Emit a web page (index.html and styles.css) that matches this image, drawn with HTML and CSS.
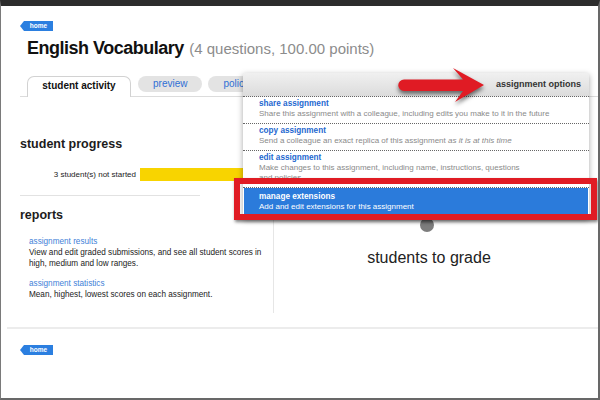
FILE: index.html
```html
<!DOCTYPE html>
<html lang="en">
<head>
<meta charset="utf-8">
<title>English Vocabulary</title>
<link rel="stylesheet" href="styles.css">
</head>
<body>
<div class="frame">
  <header class="head">
    <a class="tag">home</a>
    <h1 class="title">English Vocabulary <span class="meta">(4 questions, 100.00 points)</span></h1>
    <nav class="tabs">
      <span class="tab active">student activity</span>
      <span class="tab pill pill-preview">preview</span>
      <span class="tab pill">policies</span>
    </nav>
  </header>

  <main class="content">
    <section class="left">
      <h2 class="sec">student progress</h2>
      <div class="progress">
        <span class="plabel">3 student(s) not started</span>
        <span class="bar"></span>
      </div>
      <hr class="divider">
      <h2 class="sec reports">reports</h2>
      <div class="report">
        <a class="rlink">assignment results</a>
        <p class="rdesc">View and edit graded submissions, and see all student scores in high, medium and low ranges.</p>
      </div>
      <div class="report">
        <a class="rlink">assignment statistics</a>
        <p class="rdesc">Mean, highest, lowest scores on each assignment.</p>
      </div>
    </section>
    <section class="right">
      <div class="grade">students to grade</div>
    </section>
  </main>

  <footer class="foot">
    <a class="tag">home</a>
  </footer>

  <span class="dot"></span>

  <div class="menu">
    <div class="menu-head">assignment options</div>
    <div class="item">
      <div class="item-title">share assignment</div>
      <div class="item-desc">Share this assignment with a colleague, including edits you make to it in the future</div>
    </div>
    <div class="item">
      <div class="item-title">copy assignment</div>
      <div class="item-desc">Send a colleague an exact replica of this assignment <em>as it is at this time</em></div>
    </div>
    <div class="item">
      <div class="item-title">edit assignment</div>
      <div class="item-desc">Make changes to this assignment, including name, instructions, questions<br>and policies</div>
    </div>
    <div class="item item-active">
      <div class="item-title">manage extensions</div>
      <div class="item-desc">Add and edit extensions for this assignment</div>
    </div>
  </div>

  <div class="callout"></div>

  <svg class="arrow" viewBox="396 62 100 50" width="100" height="50" aria-hidden="true">
    <path d="M404 79.5 L463 79.5 L453 68 L484 85 L455 102 L463 91 L404 91 A5.75 5.75 0 0 1 404 79.5 Z" fill="#e01b24"/>
  </svg>
</div>
</body>
</html>
```

FILE: styles.css
```css
html, body {
  margin: 0;
  padding: 0;
  background: #fff;
}

body {
  font-family: "Liberation Sans", Arial, Helvetica, sans-serif;
  color: #222;
}

.frame {
  position: relative;
  width: 600px;
  height: 400px;
  box-sizing: border-box;
  border-top: 6px solid #2c2c2c;
  border-left: 1px solid #7a7a7a;
  border-right: 2px solid #686868;
  border-bottom: 2px solid #686868;
  background: #fff;
  overflow: hidden;
}

/* header */
.head {
  padding: 15px 0 0 19px;
}

.tag {
  display: block;
  width: 33px;
  height: 10px;
  box-sizing: border-box;
  padding-left: 4px;
  background: #2b7fe0;
  color: #fff;
  font-weight: bold;
  font-size: 6.5px;
  line-height: 10px;
  text-align: center;
  clip-path: polygon(4px 0, 100% 0, 100% 100%, 4px 100%, 0 50%);
}

.title {
  margin: 6px 0 0 7px;
  font-size: 18px;
  line-height: 22px;
  font-weight: bold;
  letter-spacing: -0.5px;
  color: #111;
  white-space: nowrap;
}

.meta {
  margin-left: 1px;
  font-weight: normal;
  font-size: 15px;
  letter-spacing: 0;
  color: #8c8c8c;
}

.tabs {
  display: flex;
  align-items: flex-start;
  height: 20px;
  margin-top: 16px;
  padding-left: 7px;
  border-bottom: 1px solid #dcdcdc;
}

.tab {
  display: block;
  font-size: 10px;
  white-space: nowrap;
}

.active {
  width: 104px;
  height: 21px;
  box-sizing: border-box;
  border: 1px solid #d2d2d2;
  border-bottom: 0;
  border-radius: 7px 7px 0 0;
  background: #fff;
  text-align: center;
  font-weight: bold;
  line-height: 18px;
  color: #111;
}

.pill {
  height: 16px;
  padding: 0 15px;
  border-radius: 8px;
  background: #e3e3e3;
  color: #2f6fd5;
  line-height: 16px;
  margin-left: 6px;
}

.pill-preview {
  margin-left: 7px;
}

/* main content */
.content {
  display: flex;
  height: 216px;
}

.left {
  width: 272px;
  box-sizing: border-box;
  padding-left: 19px;
}

.sec {
  margin: 40px 0 0;
  font-size: 12.5px;
  line-height: 15px;
  font-weight: bold;
  color: #1c1c1c;
}

.progress {
  display: flex;
  align-items: center;
  height: 13px;
  margin-top: 16px;
}

.plabel {
  width: 116px;
  text-align: right;
  font-size: 8px;
  color: #222;
  white-space: nowrap;
}

.bar {
  width: 120px;
  height: 13px;
  margin-left: 4px;
  background: #f8d400;
}

.divider {
  width: 180px;
  height: 0;
  margin: 14px 0 0;
  border: 0;
  border-top: 1px solid #e2e2e2;
}

.reports {
  margin-top: 12px;
}

.report {
  padding-left: 9px;
  margin-top: 9px;
  font-size: 8.2px;
  line-height: 11px;
}

.reports + .report {
  margin-top: 13px;
}

.rlink {
  display: block;
  color: #3f7fd8;
}

.rdesc {
  margin: 0;
  color: #222;
}

.right {
  flex: 1;
  border-left: 1px solid #e6e6e6;
  padding: 151px 14px 0 0;
}

.grade {
  text-align: center;
  font-size: 16px;
  line-height: 20px;
  color: #222;
}

/* footer */
.foot {
  margin: 14px 0 0 6px;
  padding: 16px 0 0 13px;
  border-top: 2px solid #ececec;
}

/* overlays */
.dot {
  position: absolute;
  left: 419px;
  top: 212px;
  width: 14px;
  height: 14px;
  border-radius: 50%;
  background: #7d7d7d;
}

.menu {
  position: absolute;
  left: 242px;
  top: 67px;
  width: 346px;
  padding-bottom: 4px;
  background: #fff;
  box-shadow: 0 2px 6px rgba(0, 0, 0, 0.35);
}

.menu-head {
  height: 23px;
  padding-right: 8px;
  background: linear-gradient(#f0f0f0, #dcdcdc);
  border-bottom: 1px dotted #666;
  text-align: right;
  font-size: 9px;
  font-weight: bold;
  line-height: 23px;
  color: #333;
}

.item {
  padding: 2px 16px 4px;
  border-bottom: 1px dotted #666;
}

.item-title {
  font-size: 8.2px;
  line-height: 10px;
  font-weight: bold;
  color: #2468d0;
}

.item-desc {
  font-size: 8px;
  line-height: 10px;
  color: #8a8a8a;
  white-space: nowrap;
}

.item-active {
  margin: 0 1px;
  padding: 4px 15px 2px;
  background: #2b7bdb;
  border-bottom: 0;
}

.item-active .item-title,
.item-active .item-desc {
  color: #fff;
}

.callout {
  position: absolute;
  left: 233px;
  top: 172px;
  width: 363px;
  height: 42px;
  box-sizing: border-box;
  border: 6px solid #e01c24;
  box-shadow: 1px 2px 3px rgba(0, 0, 0, 0.5);
}

.arrow {
  position: absolute;
  left: 395px;
  top: 56px;
  filter: drop-shadow(0 3px 2px rgba(0, 0, 0, 0.55));
}
```
